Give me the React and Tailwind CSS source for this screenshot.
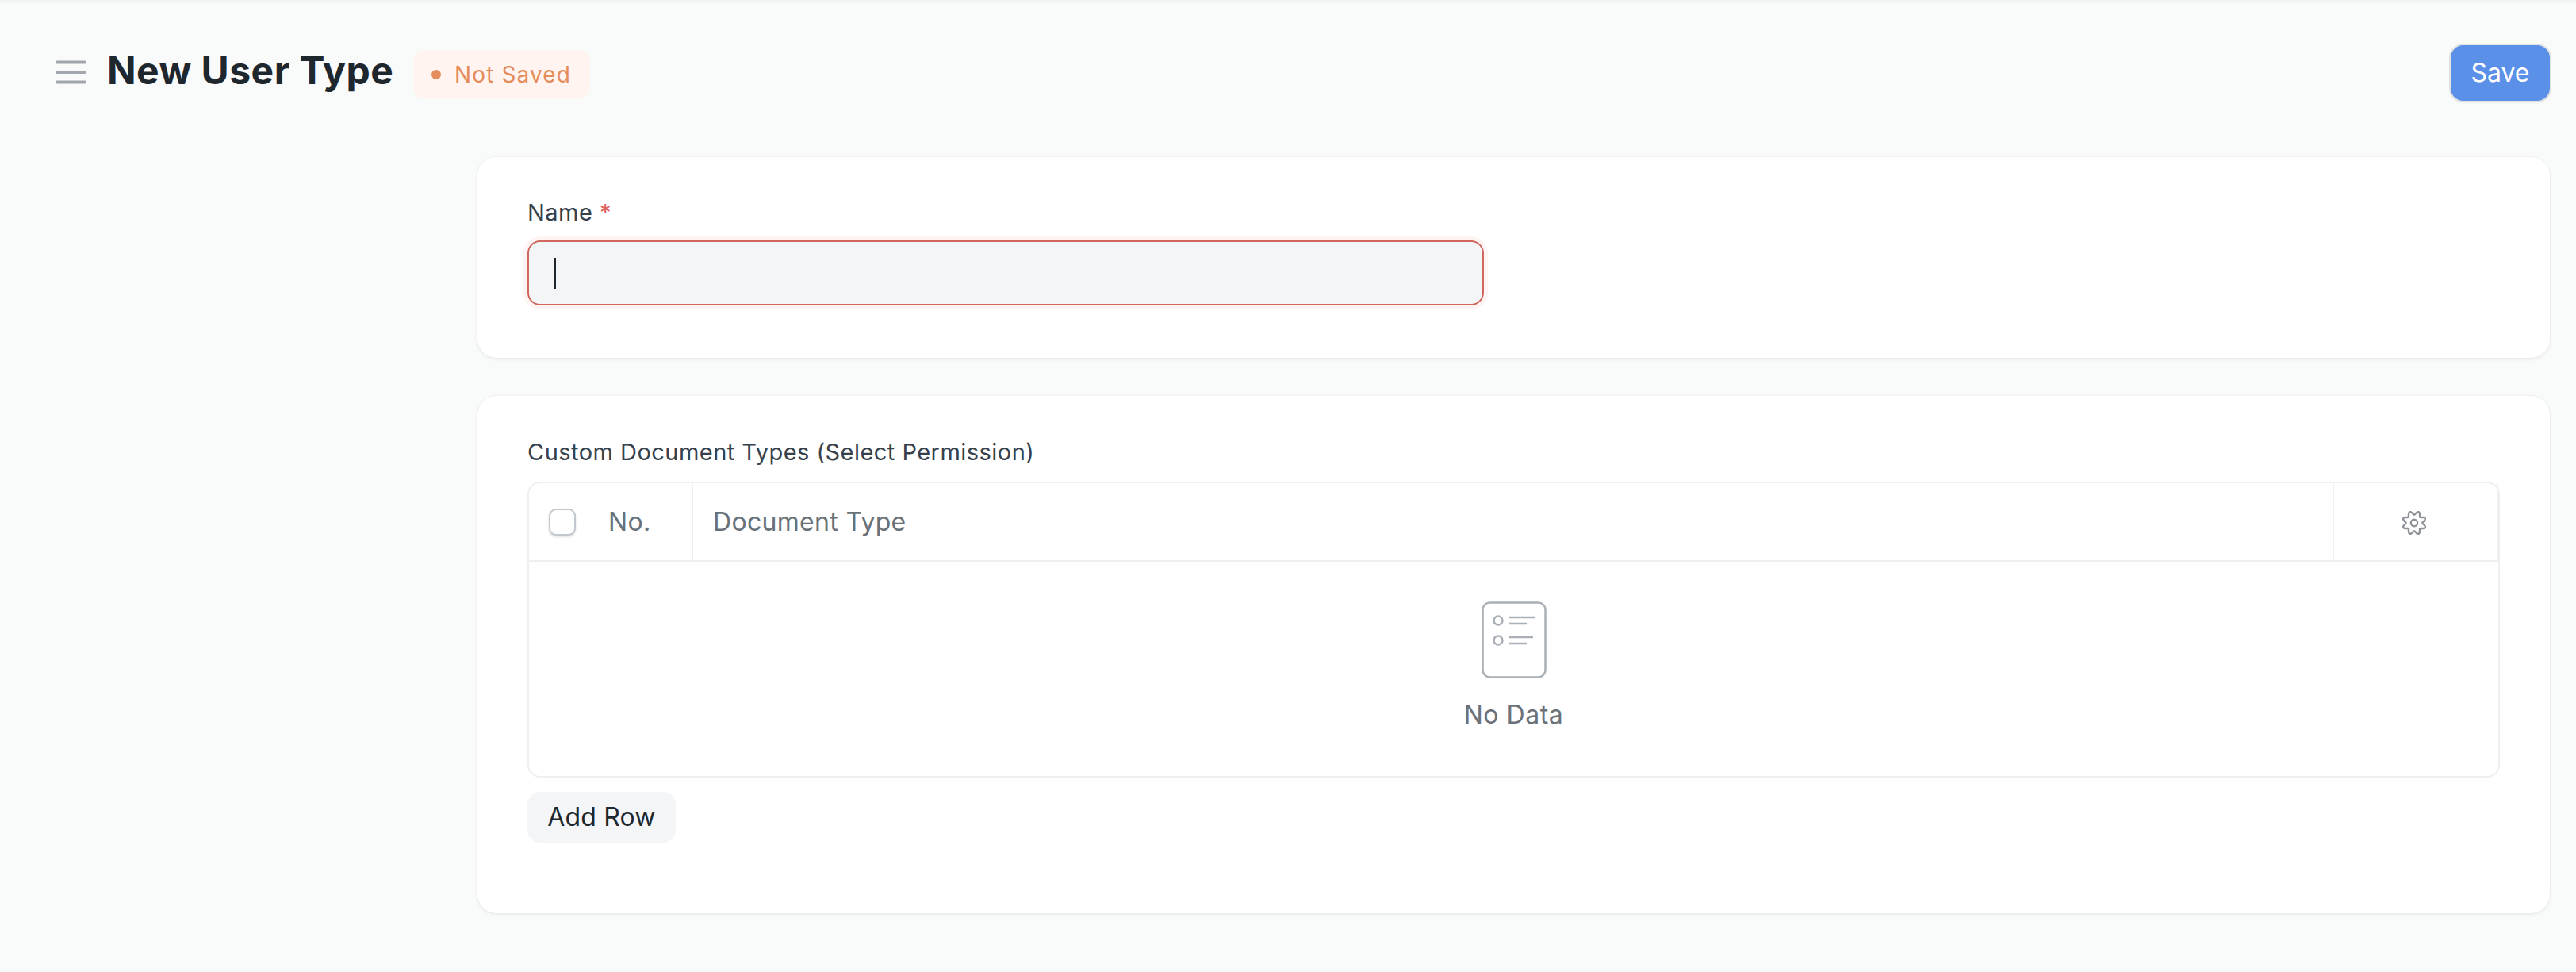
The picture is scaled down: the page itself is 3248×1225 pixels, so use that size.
import { useMemo } from "react";

function NoDataIcon() {
  return (
    <svg width="82" height="97" viewBox="0 0 82 97" fill="none" stroke="#a9b0b7" strokeWidth="2.5">
      <rect x="1.5" y="1.5" width="79" height="94" rx="9" />
      <circle cx="21" cy="24" r="5.5" />
      <circle cx="21" cy="49" r="5.5" />
      <path d="M35 20H67M35 28H57M35 45H65M35 53H57" />
    </svg>
  );
}

// wavy 8 tooth cog, same outline as the frappe settings icon
function GearIcon() {
  const d = useMemo(() => {
    const pts = [];
    for (let i = 0; i < 160; i++) {
      const a = (i / 160) * Math.PI * 2;
      const r = 12.6 + 2.3 * Math.cos(8 * a);
      pts.push(`${(16 + r * Math.cos(a)).toFixed(2)} ${(16 + r * Math.sin(a)).toFixed(2)}`);
    }
    return "M" + pts.join("L") + "Z";
  }, []);
  return (
    <svg width="32" height="32" viewBox="0 0 32 32" fill="none" stroke="#8d9399" strokeWidth="2.4">
      <path d={d} transform="rotate(22.5 16 16)" strokeLinejoin="round" />
      <circle cx="16" cy="16" r="4.2" />
    </svg>
  );
}

function App() {
  return (
    <div className="min-h-[1225px] bg-[#f9fafa] font-['Inter',sans-serif] text-[#1f272e]">
      <div className="h-[2px] bg-[#f1f2f2] shadow-[0_1px_3px_rgba(0,0,0,0.05)]" />

      {/* Page head */}
      <div className="mt-[55px] h-[70px] pl-[70px] pr-[33px] flex items-center justify-between">
        <div className="flex items-center">
          <svg width="39" height="30" viewBox="0 0 39 30" className="mt-[-2px]">
            <path d="M2 2.5H37M2 15H37M2 27.5H37" stroke="#9fa6ae" strokeWidth="4" strokeLinecap="round" />
          </svg>
          <h1 className="ml-[26px] w-[364px] whitespace-nowrap text-[48px] leading-none font-bold tracking-[0.01em] mt-[-6px]">New User Type</h1>
          <div className="ml-[22px] mt-[3px] h-[61px] w-[223px] rounded-[14px] bg-[#fff4f0] flex items-center pl-[23px] text-[#e58c5c] text-[28px] tracking-[0.04em]">
            <span className="w-3 h-3 rounded-full bg-[#e58c5c] mr-[17px]" />
            Not Saved
          </div>
        </div>
        <button className="w-[125px] h-[70px] rounded-[16px] bg-[#5b90e8] text-white text-[32px] shadow-[0_0_0_2px_#e2e2e2,0_2px_4px_rgba(0,0,0,0.06)]">
          Save
        </button>
      </div>

      <div className="mt-[71px] ml-[602px] mr-[33px] flex flex-col gap-[48px]">
        {/* Name card */}
        <div className="h-[253px] rounded-[24px] bg-white shadow-[0_0_3px_rgba(0,0,0,0.07),0_2px_5px_rgba(0,0,0,0.05)] px-[63px] pt-[52px]">
          <div className="text-[29px] leading-[36px] text-[#36414c] tracking-[0.016em]">
            Name <span className="text-[#e0605a]">*</span>
          </div>
          <div className="mt-[17px] w-[1206px] h-[82px] rounded-[16px] border-2 border-[#d1685f] bg-[#f4f5f7] shadow-[0_0_0_5px_#fdf4f3] flex items-center pl-[31px]">
            <span className="w-[3px] h-[39px] bg-[#1f272e]" />
          </div>
        </div>

        {/* Child table card */}
        <div className="h-[652px] rounded-[24px] bg-white shadow-[0_0_3px_rgba(0,0,0,0.07),0_2px_5px_rgba(0,0,0,0.05)] px-[63px] pt-[53px]">
          <div className="text-[29px] leading-[36px] text-[#36414c] tracking-[0.016em]">
            Custom Document Types (Select Permission)
          </div>
          <div className="mt-[19px] h-[373px] rounded-[16px] border-2 border-[#eeeff0] flex flex-col">
            <div className="h-[99px] flex border-b-2 border-[#eeeff0] text-[32px] text-[#687178] tracking-[0.01em] shrink-0">
              <div className="w-[207px] flex items-center border-r-2 border-[#eeeff0] pl-[25px]">
                <span className="w-[34px] h-[34px] rounded-[9px] border-2 border-[#c3c8ce] bg-white shadow-[0_2px_3px_rgba(0,0,0,0.12)]" />
                <span className="ml-[41px]">No.</span>
              </div>
              <div className="flex-1 flex items-center pl-[25px]">Document Type</div>
              <div className="w-[209px] flex items-center justify-center border-l-2 border-r-2 border-[#eeeff0] pr-[4px] pt-[2px]">
                <GearIcon />
              </div>
            </div>
            <div className="flex-1 flex flex-col items-center pt-[50px]">
              <NoDataIcon />
              <div className="mt-[26px] text-[32px] leading-[40px] text-[#6c7278] tracking-[0.016em]">No Data</div>
            </div>
          </div>
          <button className="mt-[18px] w-[187px] h-[64px] rounded-[16px] bg-[#f4f5f7] text-[32px] tracking-[0.005em] text-[#1f272e]">
            Add Row
          </button>
        </div>
      </div>
    </div>
  );
}

export default App;
